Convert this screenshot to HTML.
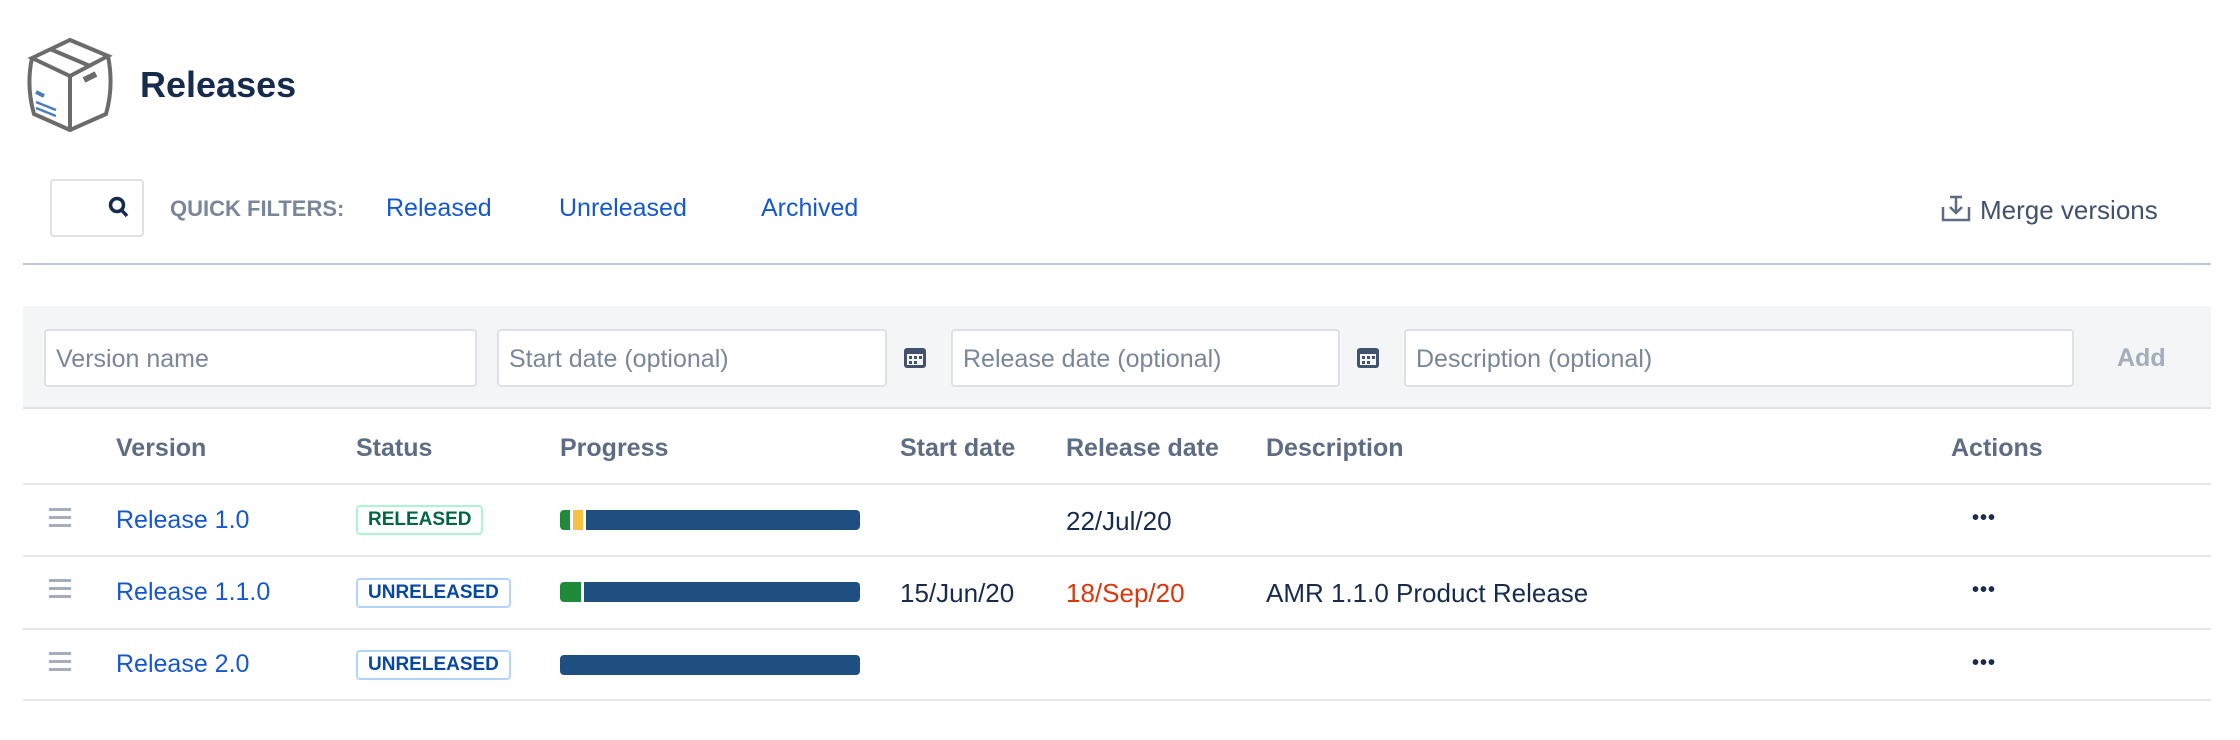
<!DOCTYPE html>
<html><head><meta charset="utf-8"><style>
*{box-sizing:border-box;margin:0;padding:0}
body{width:2240px;height:740px;background:#fff;font-family:"Liberation Sans",sans-serif;position:relative;overflow:hidden;color:#172b4d}
.a{position:absolute;white-space:nowrap}
.link{color:#1558d0;font-size:25px}
.hdr{color:#5e6c84;font-size:25px;font-weight:bold;top:434px}
.inp{position:absolute;top:329px;height:58px;border:2px solid #dfe1e6;border-radius:4px;background:#fff;color:#7a869a;font-size:25px;padding:14px 10px}
.line{position:absolute;left:23px;width:2188px;height:2px;background:#e4e6ea}
.badge{position:absolute;height:30px;border:2px solid;border-radius:4px;font-size:19px;font-weight:bold;padding:3px 10px;line-height:20px}
.bar{position:absolute;left:560px;height:20px;width:300px;border-radius:4px;overflow:hidden;display:flex;gap:3px}
.dots{position:absolute;left:1972px;font-size:20px;font-weight:bold;letter-spacing:1px}
.drag{position:absolute;left:49px;width:22px}
.drag i{display:block;height:3px;background:#a5adba;margin-bottom:5px}
</style></head><body>
<svg class="a" style="left:22px;top:34px" width="100" height="100" viewBox="0 0 100 100" fill="none" stroke="#6b6b6b" stroke-width="4">
<path d="M10 24 L48 6 L86 22 L48 42 Z"/><path d="M28 15 L68 32"/><path d="M10 24 Q4 52 12 80 L48 96 L84 80 Q92 52 86 22"/><path d="M48 42 L48 96"/>
<path d="M62 46 L74 40" stroke-width="6"/><path d="M14 58 L22 62" stroke="#4a7cc0"/><path d="M14 68 L34 76 M14 74 L34 82" stroke="#4a7cc0" stroke-width="2.5"/>
</svg>
<div class="a" style="left:140px;top:64px;font-size:36px;font-weight:bold;color:#172b4d">Releases</div>
<div class="a" style="left:50px;top:179px;width:94px;height:58px;border:2px solid #dfe1e6;border-radius:4px"></div>
<svg class="a" style="left:108px;top:196px" width="22" height="24" viewBox="0 0 22 24" fill="none" stroke="#172b4d" stroke-width="3.5"><circle cx="9" cy="9" r="6.5"/><path d="M13.5 14 L19 20"/></svg>
<div class="a" style="left:170px;top:196px;font-size:22px;font-weight:bold;color:#7a869a">QUICK FILTERS:</div>
<div class="a link" style="left:386px;top:194px">Released</div>
<div class="a link" style="left:559px;top:194px">Unreleased</div>
<div class="a link" style="left:761px;top:194px">Archived</div>
<svg class="a" style="left:1940px;top:193px" width="32" height="30" viewBox="0 0 32 30" fill="none" stroke="#5e6c84" stroke-width="2.5"><path d="M3 14 V27 H29 V14"/><path d="M16 3 V20 M10 14 L16 20 L22 14 M10 4 H22"/></svg>
<div class="a" style="left:1980px;top:195px;font-size:26px;color:#42526e">Merge versions</div>
<div class="line" style="top:263px;background:#c1c7d0"></div>
<div class="a" style="left:23px;top:306px;width:2188px;height:103px;background:#f4f5f7;border-bottom:2px solid #dfe1e6"></div>
<div class="inp" style="left:44px;width:433px">Version name</div>
<div class="inp" style="left:497px;width:390px">Start date (optional)</div>
<div class="inp" style="left:951px;width:389px">Release date (optional)</div>
<div class="inp" style="left:1404px;width:670px">Description (optional)</div>
<svg class="a" style="left:902px;top:344px" width="26" height="26" viewBox="0 0 26 26"><rect x="2" y="4" width="22" height="20" rx="3" fill="#42526e"/><rect x="5" y="10" width="16" height="11" fill="#f4f5f7"/><g fill="#42526e"><rect x="7" y="12" width="3" height="3"/><rect x="12" y="12" width="3" height="3"/><rect x="17" y="12" width="3" height="3"/><rect x="7" y="17" width="3" height="3"/><rect x="12" y="17" width="3" height="3"/></g></svg>
<svg class="a" style="left:1355px;top:344px" width="26" height="26" viewBox="0 0 26 26"><rect x="2" y="4" width="22" height="20" rx="3" fill="#42526e"/><rect x="5" y="10" width="16" height="11" fill="#f4f5f7"/><g fill="#42526e"><rect x="7" y="12" width="3" height="3"/><rect x="12" y="12" width="3" height="3"/><rect x="17" y="12" width="3" height="3"/><rect x="7" y="17" width="3" height="3"/><rect x="12" y="17" width="3" height="3"/></g></svg>
<div class="a" style="left:2117px;top:344px;font-size:25px;font-weight:bold;color:#a5adba">Add</div>
<div class="a hdr" style="left:116px">Version</div>
<div class="a hdr" style="left:356px">Status</div>
<div class="a hdr" style="left:560px">Progress</div>
<div class="a hdr" style="left:900px">Start date</div>
<div class="a hdr" style="left:1066px">Release date</div>
<div class="a hdr" style="left:1266px">Description</div>
<div class="a hdr" style="left:1951px">Actions</div>
<div class="line" style="top:483px"></div>
<div class="line" style="top:555px"></div>
<div class="line" style="top:628px"></div>
<div class="line" style="top:699px"></div>
<div class="drag" style="top:508px"><i></i><i></i><i></i></div>
<div class="drag" style="top:579px"><i></i><i></i><i></i></div>
<div class="drag" style="top:652px"><i></i><i></i><i></i></div>
<div class="a link" style="left:116px;top:506px">Release 1.0</div>
<div class="a link" style="left:116px;top:578px">Release 1.1.0</div>
<div class="a link" style="left:116px;top:650px">Release 2.0</div>
<div class="badge" style="left:356px;top:505px;border-color:#abf5d1;color:#006644">RELEASED</div>
<div class="badge" style="left:356px;top:578px;border-color:#b3d4ff;color:#0747a6">UNRELEASED</div>
<div class="badge" style="left:356px;top:650px;border-color:#b3d4ff;color:#0747a6">UNRELEASED</div>
<div class="bar" style="top:510px"><span style="width:10px;background:#1f8a3a"></span><span style="width:10px;background:#f6c142"></span><span style="flex:1;background:#1f4f80"></span></div>
<div class="bar" style="top:582px"><span style="width:21px;background:#1f8a3a"></span><span style="flex:1;background:#1f4f80"></span></div>
<div class="bar" style="top:655px"><span style="flex:1;background:#1f4f80"></span></div>
<div class="a" style="left:1066px;top:506px;font-size:26px">22/Jul/20</div>
<div class="a" style="left:900px;top:578px;font-size:26px">15/Jun/20</div>
<div class="a" style="left:1066px;top:578px;font-size:26px;color:#de350b">18/Sep/20</div>
<div class="a" style="left:1266px;top:578px;font-size:26px">AMR 1.1.0 Product Release</div>
<div class="dots" style="top:507px">•••</div>
<div class="dots" style="top:579px">•••</div>
<div class="dots" style="top:652px">•••</div>
</body></html>
